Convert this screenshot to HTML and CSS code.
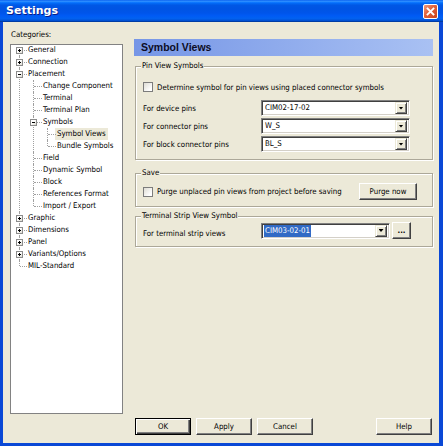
FILE: index.html
```html
<!DOCTYPE html>
<html>
<head>
<meta charset="utf-8">
<title>Settings</title>
<link rel="stylesheet" href="styles.css">
</head>
<body>
<div class="window">
  <div class="titlebar">
    <span class="title">Settings</span>
    <span class="close"><svg width="9" height="9" viewBox="0 0 9 9"><path d="M1.5 1.5L7.5 7.5M7.5 1.5L1.5 7.5" stroke="#fff" stroke-width="1.8" stroke-linecap="square"/></svg></span>
  </div>
  <div class="client">
    <div class="left">
      <div class="cat-label">Categories:</div>
      <div class="tree-box">
        <ul class="tree">
          <li><div class="row"><span class="exp plus"></span>General</div></li>
          <li><div class="row"><span class="exp plus"></span>Connection</div></li>
          <li><div class="row"><span class="exp minus"></span>Placement</div>
            <ul>
              <li><div class="row">Change Component</div></li>
              <li><div class="row">Terminal</div></li>
              <li><div class="row">Terminal Plan</div></li>
              <li><div class="row"><span class="exp minus"></span>Symbols</div>
                <ul>
                  <li><div class="row"><span class="sel">Symbol Views</span></div></li>
                  <li><div class="row">Bundle Symbols</div></li>
                </ul>
              </li>
              <li><div class="row">Field</div></li>
              <li><div class="row">Dynamic Symbol</div></li>
              <li><div class="row">Block</div></li>
              <li><div class="row">References Format</div></li>
              <li><div class="row">Import / Export</div></li>
            </ul>
          </li>
          <li><div class="row"><span class="exp plus"></span>Graphic</div></li>
          <li><div class="row"><span class="exp plus"></span>Dimensions</div></li>
          <li><div class="row"><span class="exp plus"></span>Panel</div></li>
          <li><div class="row"><span class="exp plus"></span>Variants/Options</div></li>
          <li><div class="row">MIL-Standard</div></li>
        </ul>
      </div>
    </div>
    <div class="right">
      <div class="header">Symbol Views</div>

      <fieldset class="group pin">
        <legend>Pin View Symbols</legend>
        <div class="check-row"><span class="cb"></span><span>Determine symbol for pin views using placed connector symbols</span></div>
        <div class="fields">
          <div class="field"><span class="flabel">For device pins</span><div class="combo"><span class="val">CIM02-17-02</span><span class="drop"><i></i></span></div></div>
          <div class="field"><span class="flabel">For connector pins</span><div class="combo"><span class="val">W_S</span><span class="drop"><i></i></span></div></div>
          <div class="field"><span class="flabel">For block connector pins</span><div class="combo"><span class="val">BL_S</span><span class="drop"><i></i></span></div></div>
        </div>
      </fieldset>

      <fieldset class="group save">
        <legend>Save</legend>
        <div class="save-row"><span class="cb"></span><span>Purge unplaced pin views from project before saving</span><span class="btn purge">Purge now</span></div>
      </fieldset>

      <fieldset class="group term">
        <legend>Terminal Strip View Symbol</legend>
        <div class="field term-field"><span class="flabel low">For terminal strip views</span><div class="combo short"><span class="val"><span class="hl">CIM03-02-01</span></span><span class="drop"><i></i></span></div><span class="btn dots">...</span></div>
      </fieldset>

      <div class="buttons">
        <span class="btn default">OK</span>
        <span class="btn">Apply</span>
        <span class="btn">Cancel</span>
        <span class="btn help">Help</span>
      </div>
    </div>
  </div>
</div>
</body>
</html>
```

FILE: styles.css
```css
* { box-sizing: border-box; }
html, body { margin: 0; padding: 0; }
body {
  font-family: "DejaVu Sans Condensed", "DejaVu Sans", sans-serif;
  font-stretch: condensed;
  font-size: 7.8px;
  color: #000;
  background: #fff;
}

.window {
  width: 443px;
  height: 446px;
  display: flex;
  flex-direction: column;
  background: #0a48d6;
}

.titlebar {
  height: 22px;
  flex: none;
  display: flex;
  justify-content: space-between;
  align-items: flex-start;
  padding: 0 5px 0 6px;
  background: linear-gradient(to bottom, #0058ee 0%, #3593ff 5%, #1b82ff 9%, #036ffc 13%, #0262ee 18%, #0057e5 25%, #0054e3 40%, #0055eb 60%, #005bf5 72%, #0261f0 84%, #0052d6 93%, #0040ab 97%, #003092 100%);
}
.title {
  font-family: "DejaVu Sans", sans-serif;
  font-stretch: normal;
  font-weight: bold;
  font-size: 11px;
  line-height: 22px;
  color: #fff;
  text-shadow: 1px 1px #0a1d86;
}
.close {
  margin-top: 4px;
  width: 15px;
  height: 15px;
  border: 1px solid #fff;
  border-radius: 2px;
  background: linear-gradient(135deg, #ef9a7c 0%, #e0603a 45%, #c9441c 100%);
  display: flex;
  align-items: center;
  justify-content: center;
}

.client {
  flex: 1;
  margin: 0 4px 3px 3px;
  background: #ece9d8;
  display: flex;
}

.left {
  width: 120px;
  padding: 8px 0 29px 7px;
  display: flex;
  flex-direction: column;
}
.cat-label {
  height: 10px;
  line-height: 10px;
  margin-bottom: 4px;
  padding-left: 1px;
}
.tree-box {
  flex: 1;
  background: #fff;
  border: 1px solid #828282;
}

.tree, .tree ul {
  list-style: none;
  margin: 0;
  padding: 0;
}
.tree { margin-top: -1px; }
.tree ul { margin-left: 14px; }
.tree li { position: relative; }
.tree li::before {
  content: "";
  position: absolute;
  left: 8px;
  top: 0;
  bottom: 0;
  border-left: 1px dotted #a0a0a0;
}
.tree > li:first-child::before { top: 6px; }
.tree li:last-child::before { bottom: auto; height: 6px; }
.row {
  position: relative;
  height: 12px;
  line-height: 12px;
  padding-left: 18px;
  white-space: nowrap;
}
.tree > li > .row { padding-left: 17px; }
.row::before {
  content: "";
  position: absolute;
  left: 9px;
  top: 6px;
  width: 8px;
  border-top: 1px dotted #a0a0a0;
}
.tree > li > .row::before { width: 7px; }
.exp {
  position: absolute;
  left: 5px;
  top: 3px;
  width: 7px;
  height: 7px;
  border: 1px solid #8c8c8c;
  background: linear-gradient(135deg, #fff 40%, #dcdad0);
  z-index: 1;
}
.exp::before {
  content: "";
  position: absolute;
  left: 1px;
  top: 2px;
  width: 3px;
  height: 1px;
  background: #000;
}
.exp.plus::after {
  content: "";
  position: absolute;
  left: 2px;
  top: 1px;
  width: 1px;
  height: 3px;
  background: #000;
}
.sel {
  display: inline-block;
  height: 12px;
  margin-left: -2px;
  padding: 0 2px;
  background: #ece9d8;
}

.right {
  width: 299px;
  margin-left: 11px;
  padding: 17px 0 8px;
  display: flex;
  flex-direction: column;
}
.header {
  height: 17px;
  line-height: 17px;
  padding-left: 7px;
  font-family: "Liberation Sans", Arial, sans-serif;
  font-stretch: normal;
  font-weight: bold;
  font-size: 10.5px;
  color: #0c0c24;
  background: linear-gradient(to right, #7696e6, #a9c1f3);
}

.group {
  margin: 0 0 0 1px;
  padding: 0 7px;
  min-width: 0;
  border: 1px solid #aca899;
  box-shadow: inset 1px 1px #fff, 1px 1px #fff;
}
.group legend {
  padding: 0 1px;
  margin-left: -2px;
  line-height: 10px;
  background: #ece9d8;
}
.pin { margin-top: 5px; padding-top: 10px; padding-bottom: 7px; }
.save { margin-top: 8px; padding-top: 5px; padding-bottom: 6px; }
.term { margin-top: 4px; padding-top: 1px; padding-bottom: 7px; }

.check-row {
  display: flex;
  align-items: center;
  height: 12px;
}
.cb {
  flex: none;
  width: 10px;
  height: 10px;
  margin-right: 4px;
  border: 1px solid #7c7c7c;
  background: linear-gradient(135deg, #dedcd4, #fff 80%);
}

.fields {
  margin-top: 7px;
  display: flex;
  flex-direction: column;
  gap: 2px;
}
.field {
  display: flex;
  align-items: center;
  height: 16px;
}
.flabel {
  flex: none;
  width: 118px;
}
.combo {
  display: flex;
  align-items: center;
  width: 149px;
  height: 16px;
  padding: 1px;
  background: #fff;
  border: 1px solid;
  border-color: #808080 #fff #fff #808080;
  box-shadow: inset 1px 1px #404040, inset -1px -1px #d4d0c8;
}
.combo.short { width: 129px; }
.val {
  flex: 1;
  line-height: 12px;
  padding-left: 2px;
  white-space: nowrap;
}
.hl {
  display: inline-block;
  line-height: 12px;
  margin-left: -1px;
  padding: 0 1px;
  background: #316ac5;
  color: #fff;
}
.drop {
  flex: none;
  width: 12px;
  height: 12px;
  margin-right: 1px;
  background: #ece9d8;
  border: 1px solid;
  border-color: #ece9d8 #404040 #404040 #ece9d8;
  box-shadow: inset 1px 1px #fff, inset -1px -1px #808080;
  display: flex;
  align-items: center;
  justify-content: center;
}
.drop i {
  display: block;
  width: 5px;
  height: 3px;
  background: #000;
  clip-path: polygon(0 0, 100% 0, 50% 100%);
}

.save-row {
  display: flex;
  align-items: center;
  height: 17px;
}

.btn {
  display: flex;
  align-items: center;
  justify-content: center;
  height: 17px;
  background: #ece9d8;
  border: 1px solid;
  border-color: #fff #404040 #404040 #fff;
  box-shadow: inset -1px -1px #808080;
  white-space: nowrap;
}
.btn.default {
  border-color: #000;
  box-shadow: inset 1px 1px #fff, inset -1px -1px #404040, inset -2px -2px #808080;
}
.purge {
  width: 58px;
  margin-left: auto;
  margin-right: 8px;
}
.term-field { height: 17px; }
.low { padding-top: 5px; }
.dots {
  width: 19px;
  margin-left: 2px;
  font-weight: bold;
}

.buttons {
  margin-top: auto;
  display: flex;
  gap: 5px;
  padding: 0 1px;
}
.buttons .btn { width: 56px; }
.buttons .help { margin-left: auto; }
```
